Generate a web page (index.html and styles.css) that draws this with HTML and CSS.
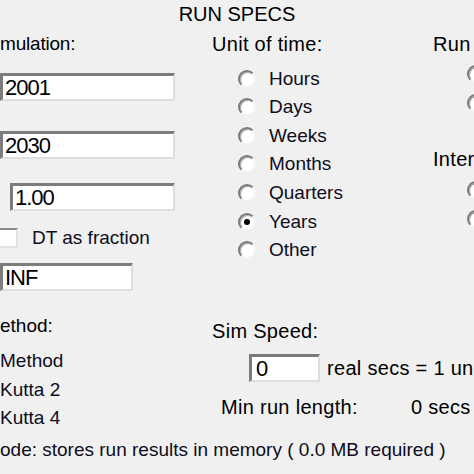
FILE: index.html
```html
<!DOCTYPE html>
<html lang="en">
<head>
    <meta charset="UTF-8">
    <meta name="viewport" content="width=device-width, initial-scale=1.0">
    <title>Run Specs</title>
    <link rel="stylesheet" href="styles.css">
</head>
<body>
    <div class="dialog">
        <div class="title">RUN SPECS</div>

        <div class="dialog-body">
            <!-- time bounds + integration -->
            <div class="col-left">
                <div class="label l-bounds">mulation:</div>
                <div class="field f-start">2001</div>
                <div class="field f-final">2030</div>
                <div class="field f-dt">1.00</div>
                <div class="check-row">
                    <span class="checkbox"></span>
                    <span class="opt-text">DT as fraction</span>
                </div>
                <div class="field f-save">INF</div>
                <div class="label l-method">ethod:</div>
                <ul class="method-list">
                    <li>Method</li>
                    <li>Kutta 2</li>
                    <li>Kutta 4</li>
                </ul>
            </div>

            <div class="col-right">
                <div class="top-row">
                    <div class="col-unit">
                        <div class="label">Unit of time:</div>
                        <ul class="radio-list">
                            <li><span class="radio"></span><span class="opt-text">Hours</span></li>
                            <li><span class="radio"></span><span class="opt-text">Days</span></li>
                            <li><span class="radio"></span><span class="opt-text">Weeks</span></li>
                            <li><span class="radio"></span><span class="opt-text">Months</span></li>
                            <li><span class="radio"></span><span class="opt-text">Quarters</span></li>
                            <li><span class="radio checked"></span><span class="opt-text">Years</span></li>
                            <li><span class="radio"></span><span class="opt-text">Other</span></li>
                        </ul>
                    </div>
                    <div class="col-run">
                        <div class="label">Run</div>
                        <ul class="radio-list short l-run">
                            <li><span class="radio"></span></li>
                            <li><span class="radio"></span></li>
                        </ul>
                        <div class="label l-inter">Inter</div>
                        <ul class="radio-list short l-int">
                            <li><span class="radio"></span></li>
                            <li><span class="radio"></span></li>
                        </ul>
                    </div>
                </div>

                <div class="sim">
                    <div class="label">Sim Speed:</div>
                    <div class="sim-row">
                        <div class="field f-speed">0</div>
                        <span class="label">real secs = 1 un</span>
                    </div>
                    <div class="min-row">
                        <span class="label min-label">Min run length:</span>
                        <span class="label">0 secs</span>
                    </div>
                </div>
            </div>
        </div>

        <div class="status">ode: stores run results in memory ( 0.0 MB required )</div>
    </div>
</body>
</html>
```

FILE: styles.css
```css
body {
    margin: 0;
    padding: 0;
    background-color: #f0f0f0;
    font-family: 'Liberation Sans', Arial, sans-serif;
}
.dialog {
    width: 474px;
    height: 474px;
    overflow: hidden;
    background-color: #f0f0f0;
    white-space: nowrap;
}
.title {
    padding-top: 2px;
    font-size: 20px;
    line-height: 24px;
    text-align: center;
    color: #000;
}
.dialog-body {
    display: flex;
    margin-top: 6px;
}
.label {
    font-size: 20px;
    line-height: 24px;
    letter-spacing: 0.3px;
    color: #000;
}
.opt-text {
    font-size: 19px;
    color: #0d0d1c;
}
ul {
    list-style: none;
    margin: 0;
    padding: 0;
}

/* left column */
.col-left {
    width: 212px;
    flex-shrink: 0;
    display: flex;
    flex-direction: column;
}
.l-bounds {
    font-size: 19px;
    letter-spacing: -0.2px;
}
.field {
    box-sizing: border-box;
    height: 28px;
    background-color: #fff;
    border-top: 3px solid #7c7c7c;
    border-left: 3px solid #7c7c7c;
    border-right: 2px solid #dedede;
    border-bottom: 2px solid #dedede;
    padding-left: 2px;
    font-size: 22px;
    line-height: 23px;
    letter-spacing: -1px;
    color: #000;
}
.f-start {
    width: 175px;
    margin-top: 17px;
}
.f-final {
    width: 175px;
    margin-top: 30px;
}
.f-dt {
    width: 165px;
    margin-top: 24px;
    margin-left: 10px;
}
.check-row {
    display: flex;
    align-items: center;
    gap: 14px;
    height: 20px;
    margin-top: 17px;
    margin-left: -2px;
}
.checkbox {
    box-sizing: border-box;
    width: 20px;
    height: 20px;
    background-color: #fff;
    border-top: 2px solid #8a8a8a;
    border-left: 2px solid #8a8a8a;
    border-right: 2px solid #e2e2e2;
    border-bottom: 2px solid #e2e2e2;
}
.f-save {
    width: 133px;
    margin-top: 15px;
}
.l-method {
    font-size: 19px;
    letter-spacing: 0;
    margin-top: 23px;
}
.method-list {
    margin-top: 9px;
}
.method-list li {
    font-size: 19px;
    line-height: 28.7px;
    color: #0d0d1c;
}

/* right side */
.col-right {
    display: flex;
    flex-direction: column;
}
.top-row {
    display: flex;
}
.col-unit {
    width: 221px;
    flex-shrink: 0;
}
.radio-list {
    margin-top: 8.4px;
}
.radio-list li {
    display: flex;
    align-items: center;
    gap: 13px;
    height: 28.6px;
    padding-left: 26px;
}
.radio {
    box-sizing: border-box;
    position: relative;
    width: 18px;
    height: 18px;
    flex-shrink: 0;
    border-radius: 50%;
    background-color: #fff;
    border: 2px solid;
    border-color: #7a7a7a #f4f4f4 #f4f4f4 #7a7a7a;
    box-shadow: inset 1px 1px 0 #a8a8a8;
}
.radio.checked::after {
    content: "";
    position: absolute;
    left: 4px;
    top: 4px;
    width: 6px;
    height: 6px;
    border-radius: 50%;
    background-color: #000;
}
.col-run .radio-list li {
    padding-left: 34px;
}
.l-run {
    margin-top: 3.7px;
}
.l-inter {
    margin-top: 30px;
}
.l-int {
    margin-top: 5.2px;
}

.sim {
    margin-top: 54px;
}
.sim-row {
    display: flex;
    align-items: center;
    gap: 7px;
    margin-top: 11.3px;
    margin-left: 37px;
}
.f-speed {
    width: 71px;
    padding-left: 4px;
}
.min-row {
    display: flex;
    margin-top: 12.7px;
    margin-left: 9px;
}
.min-label {
    width: 190px;
}

.status {
    margin-top: 5px;
    font-size: 19px;
    line-height: 24px;
    color: #0d0d1c;
}
```
